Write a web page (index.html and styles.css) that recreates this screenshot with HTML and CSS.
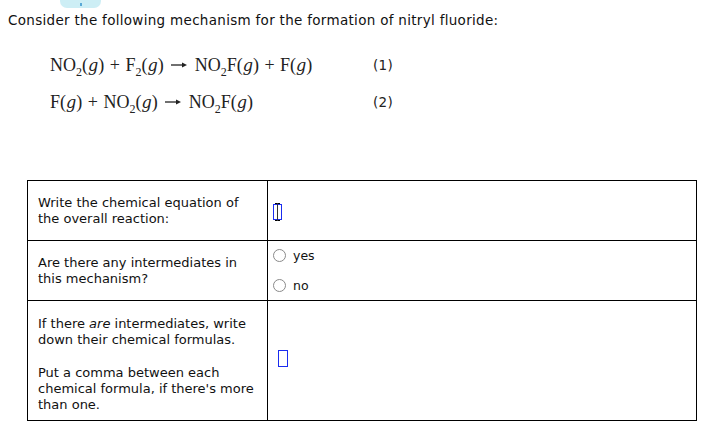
FILE: index.html
```html
<!DOCTYPE html>
<html>
<head>
<meta charset="utf-8">
<link rel="stylesheet" href="styles.css">
</head>
<body>
<div class="pill"><span class="pill-dot"></span></div>
<p class="intro">Consider the following mechanism for the formation of nitryl fluoride:</p>
<div class="mech">
  <div class="step">
    <div class="eq">NO<sub>2</sub>(<i>g</i>) + F<sub>2</sub>(<i>g</i>) <svg class="arr" width="18" height="8" viewBox="0 0 18 8"><line x1="1" y1="4" x2="13" y2="4" stroke="#222" stroke-width="1.3"/><polygon points="12,1.5 17,4 12,6.5" fill="#222"/></svg> NO<sub>2</sub>F(<i>g</i>) + F(<i>g</i>)</div>
    <div class="num">(1)</div>
  </div>
  <div class="step">
    <div class="eq">F(<i>g</i>) + NO<sub>2</sub>(<i>g</i>) <svg class="arr" width="18" height="8" viewBox="0 0 18 8"><line x1="1" y1="4" x2="13" y2="4" stroke="#222" stroke-width="1.3"/><polygon points="12,1.5 17,4 12,6.5" fill="#222"/></svg> NO<sub>2</sub>F(<i>g</i>)</div>
    <div class="num">(2)</div>
  </div>
</div>
<table class="qa">
  <tr class="r1">
    <td class="q">Write the chemical equation of the overall reaction:</td>
    <td class="a"><span class="box cursor"><span class="ib-top"></span><span class="ib-bot"></span></span></td>
  </tr>
  <tr class="r2">
    <td class="q">Are there any intermediates in this mechanism?</td>
    <td class="a radios">
      <label class="opt"><span class="radio"></span>yes</label>
      <label class="opt"><span class="radio"></span>no</label>
    </td>
  </tr>
  <tr class="r3">
    <td class="q"><p>If there <i>are</i> intermediates, write down their chemical formulas.</p><p>Put a comma between each chemical formula, if there's more than one.</p></td>
    <td class="a"><span class="box box2"></span></td>
  </tr>
</table>
</body>
</html>
```
FILE: styles.css
```css
html, body { margin: 0; padding: 0; background: #fff; }
body {
  padding: 0 8px;
  font-family: "DejaVu Sans", Verdana, sans-serif;
  font-size: 13px;
  line-height: 16px;
  color: #111;
}
.pill {
  margin-left: 52px;
  width: 41px;
  height: 8px;
  background: #cdeef5;
  border-radius: 0 0 7px 7px;
  display: flex;
  justify-content: center;
}
.pill-dot {
  display: block;
  width: 2px;
  height: 3px;
  margin-top: 3px;
  background: #5aa9d6;
}
.intro {
  margin: 4px 0 0 0;
  font-size: 13.5px;
  letter-spacing: 0.3px;
}
.mech {
  margin: 27px 0 0 42px;
  display: flex;
  flex-direction: column;
  gap: 17px;
}
.step {
  display: flex;
  align-items: center;
  height: 20px;
}
.eq {
  width: 323px;
  font-family: "Liberation Serif", "Times New Roman", serif;
  font-size: 18px;
  word-spacing: 1px;
  color: #222;
  white-space: nowrap;
}
.eq sub { font-size: 12px; vertical-align: -5px; line-height: 0; }
.eq i { font-family: "DejaVu Serif", serif; font-style: italic; font-size: 16px; }
.arr { vertical-align: 2px; margin: 0 1px; }
.num { font-size: 13.5px; letter-spacing: 0.3px; color: #222; }
.qa {
  margin: 68px 0 0 19px;
  border-collapse: collapse;
  width: 670px;
}
.qa td {
  border: 1px solid #000;
  vertical-align: middle;
  padding: 0 10px;
}
.qa td.q { width: 219px; }
.qa td.a { padding-left: 5px; }
.r1 td { height: 59px; }
.r2 td { height: 59px; }
.r3 td { height: 111px; }
.r3 td.q { padding-top: 8px; }
.q p { margin: 0; }
.q p + p { margin-top: 17px; }
.box {
  display: inline-block;
  border: 1px solid #1a2cf0;
  box-sizing: border-box;
  vertical-align: middle;
  position: relative;
}
.cursor { width: 9px; height: 16px; margin-top: 2px; }
.cursor .ib-top, .cursor .ib-bot {
  position: absolute;
  left: 1px;
  width: 5px;
  height: 1px;
  background: #000;
}
.cursor .ib-top { top: -2px; }
.cursor .ib-bot { bottom: -2px; }
.cursor::after {
  content: "";
  position: absolute;
  left: 3px;
  top: -2px;
  bottom: -2px;
  width: 1px;
  background: #333;
}
.box2 { width: 10px; height: 17px; margin-left: 5px; margin-top: -6px; }
.opt {
  display: flex;
  align-items: center;
  gap: 7px;
  height: 16px;
  font-size: 12.5px;
}
.opt + .opt { margin-top: 14px; }
.radio {
  width: 11px;
  height: 11px;
  border: 1px solid #8a8a8a;
  border-radius: 50%;
  background: #fff;
}
```
